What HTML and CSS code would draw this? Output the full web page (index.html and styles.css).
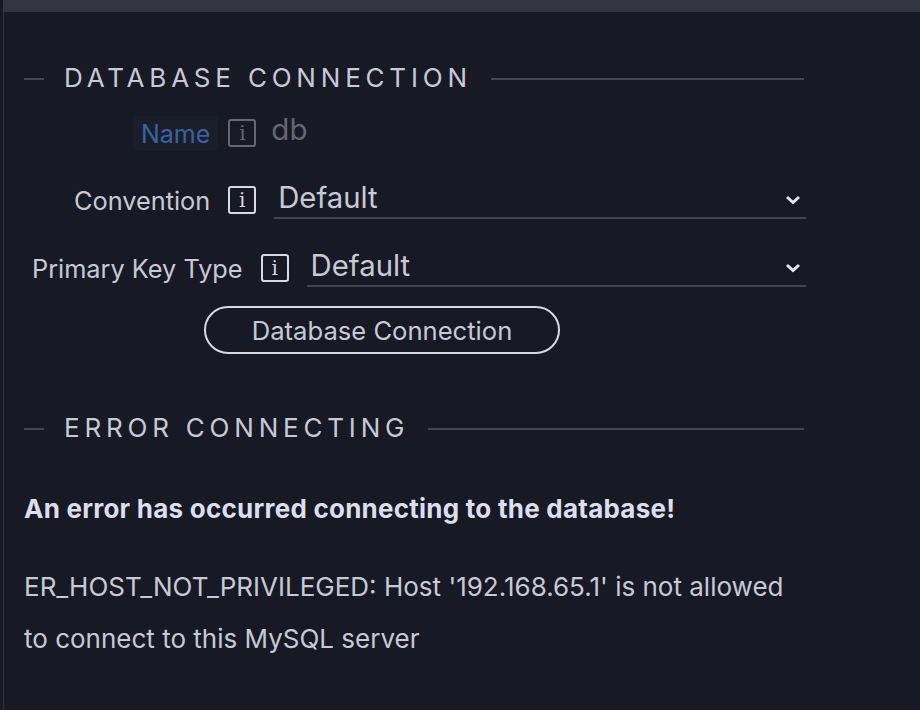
FILE: index.html
```html
<!DOCTYPE html>
<html lang="en">
<head>
    <meta charset="UTF-8">
    <title>Database Connection</title>
    <link rel="stylesheet" href="styles.css">
</head>
<body>
    <div class="sidebar-line"></div>
    <div class="main">
        <div class="topbar"></div>
        <div class="panel">
            <div class="legend"><span>DATABASE CONNECTION</span></div>

            <div class="row row-name">
                <label class="label label-name">Name</label>
                <span class="info info-dim">i</span>
                <span class="value-db">db</span>
            </div>
            <div class="row row-convention">
                <label class="label">Convention</label>
                <span class="info">i</span>
                <div class="select">
                    <span>Default</span>
                    <svg class="chevron" viewBox="0 0 14 10"><path d="M1 2 7 7.500 13 2" /></svg>
                </div>
            </div>
            <div class="row row-key">
                <label class="label">Primary Key Type</label>
                <span class="info">i</span>
                <div class="select">
                    <span>Default</span>
                    <svg class="chevron" viewBox="0 0 14 10"><path d="M1 2 7 7.500 13 2" /></svg>
                </div>
            </div>
            <div class="actions">
                <button class="btn">Database Connection</button>
            </div>

            <div class="legend legend-error"><span>ERROR CONNECTING</span></div>
            <p class="error-title">An error has occurred connecting to the database!</p>
            <p class="error-text">ER_HOST_NOT_PRIVILEGED: Host '192.168.65.1' is not allowed to connect to this MySQL server</p>
        </div>
    </div>
</body>
</html>
```

FILE: styles.css
```css
html, body {
    margin: 0;
    height: 100%;
}
body {
    display: flex;
    width: 920px;
    height: 710px;
    overflow: hidden;
    padding-left: 3px;
    box-sizing: border-box;
    background: #171a25;
    font-family: Inter, "Liberation Sans", sans-serif;
    color: #c8c9d6;
}
.sidebar-line {
    flex: none;
    width: 1px;
    background: #333642;
}
.main {
    flex: 1;
}
.topbar {
    height: 12px;
    background: #333642;
}
.panel {
    width: 782px;
    padding: 51px 0 0 20px;
}
.legend {
    display: flex;
    align-items: center;
    margin-right: 2px;
    font-size: 26px;
    line-height: 30px;
    letter-spacing: 4.8px;
    color: #c8c9d6;
}
.legend::before {
    content: "";
    width: 20px;
    height: 2px;
    margin: 2px 20px 0 0;
    background: #434550;
}
.legend::after {
    content: "";
    flex: 1;
    height: 2px;
    margin: 2px 0 0 19px;
    background: #434550;
}
.row {
    display: flex;
    align-items: center;
}
.label {
    margin: 2px 18px 0 0;
    font-size: 25.3px;
    text-align: right;
}
.row-name {
    margin: 22px 0 0 109px;
    height: 36px;
}
.label-name {
    margin: 0 10px 0 0;
    padding: 3px 8px 2px;
    border-radius: 4px;
    font-size: 25px;
    color: #3a639e;
    background: #1a1e2b;
}
.value-db {
    margin: -8px 0 0 15px;
    font-size: 29.5px;
    color: #666771;
}
.row-convention {
    margin: 28px 0 0 50px;
}
.row-key {
    margin: 28px 0 0 8px;
}
.info {
    flex: none;
    box-sizing: border-box;
    width: 28px;
    height: 28px;
    margin-top: 2px;
    border: 2px solid #d8d9e6;
    border-radius: 3px;
    font-family: "DejaVu Serif", serif;
    font-size: 20px;
    line-height: 24px;
    text-align: center;
    color: #d8d9e6;
}
.info-dim {
    margin-top: 0;
    border-color: #666771;
    color: #666771;
}
.select {
    flex: 1;
    display: flex;
    align-items: center;
    justify-content: space-between;
    height: 40px;
    margin-left: 18px;
    padding: 0 4px;
    box-sizing: border-box;
    border-bottom: 2px solid #434550;
    font-size: 29.3px;
    line-height: 36px;
}
.chevron {
    width: 14px;
    height: 10px;
    margin: 4px 2px 0 0;
    fill: none;
    stroke: #e4e5f2;
    stroke-width: 3;
}
.actions {
    display: flex;
    margin: 19px 0 0 180px;
}
.btn {
    width: 356px;
    height: 48px;
    padding: 0;
    border: 2px solid #d8d9e6;
    border-radius: 24px;
    background: none;
    font-family: inherit;
    font-size: 25.6px;
    color: #c8c9d6;
}
.legend-error {
    margin-top: 59px;
}
.error-title {
    margin: 51px 0 0;
    font-size: 26px;
    line-height: 30px;
    letter-spacing: 0.24px;
    font-weight: 700;
    color: #dcdded;
}
.error-text {
    margin: 37px 0 0;
    font-size: 26px;
    line-height: 52px;
    color: #c8c9d6;
}
```
